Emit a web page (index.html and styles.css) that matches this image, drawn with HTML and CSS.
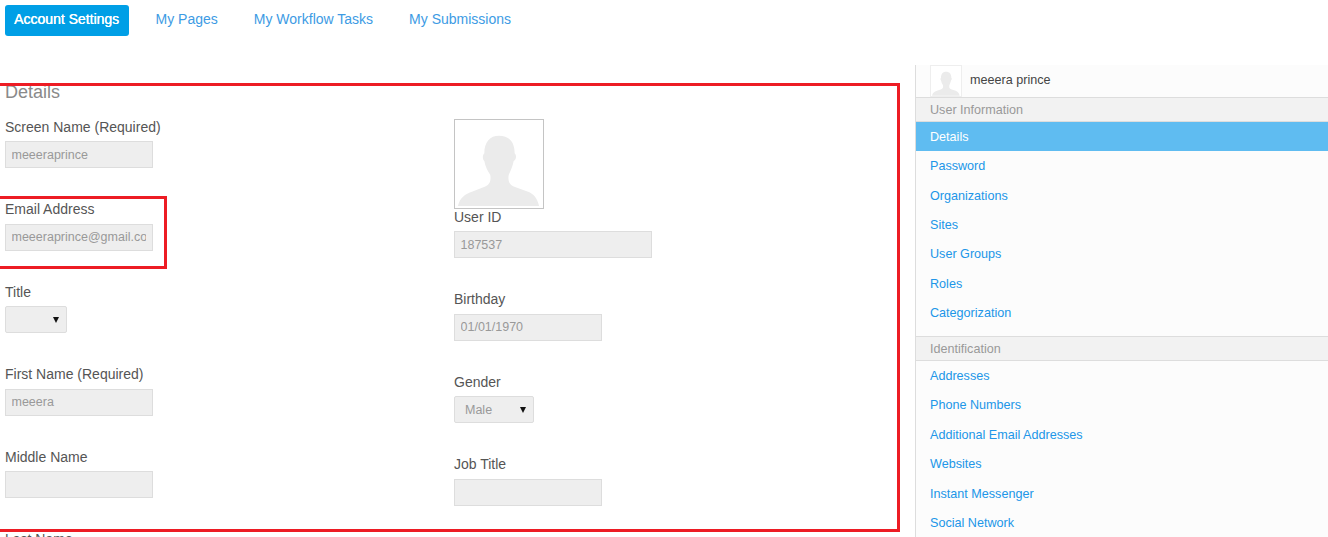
FILE: index.html
```html
<!DOCTYPE html>
<html lang="en">
<head>
<meta charset="utf-8">
<title>Account Settings</title>
<link rel="stylesheet" href="styles.css">
</head>
<body>
<svg class="defs" width="0" height="0" aria-hidden="true">
  <symbol id="silhouette" viewBox="0 0 90 90">
    <path d="M3 88C5 79 10 76 18 73L31 68C36 66 37 61 36 56C33 52 31 47 30 42C28 40 28 36 30 34C30 22 36 16 45 16C55 16 61 22 61 34C63 36 63 40 60 42C59 47 57 52 55 56C54 61 55 66 60 68L74 73C80 75 84 79 86 88Z"/>
  </symbol>
</svg>
<nav class="topnav">
  <a class="tab tab-active" href="#">Account Settings</a>
  <a class="tab" href="#">My Pages</a>
  <a class="tab" href="#">My Workflow Tasks</a>
  <a class="tab" href="#">My Submissions</a>
</nav>
<div class="layout">
  <main class="content">
    <h2 class="title">Details</h2>
    <div class="columns">
      <div class="col col-left">
        <div class="field"><label>Screen Name (Required)</label><input class="input" type="text" value="meeeraprince" disabled></div>
        <div class="field"><label>Email Address</label><input class="input" type="text" value="meeeraprince@gmail.com" disabled></div>
        <div class="field"><label>Title</label><div class="select-wrap select-title"><select class="select" disabled><option></option></select></div></div>
        <div class="field"><label>First Name (Required)</label><input class="input" type="text" value="meeera" disabled></div>
        <div class="field"><label>Middle Name</label><input class="input" type="text" disabled></div>
        <div class="field"><label>Last Name</label><input class="input" type="text" disabled></div>
      </div>
      <div class="col col-right">
        <div class="portrait"><svg class="sil" width="88" height="88"><use href="#silhouette"/></svg></div>
        <div class="field field-first"><label>User ID</label><input class="input input-wide" type="text" value="187537" disabled></div>
        <div class="field"><label>Birthday</label><input class="input" type="text" value="01/01/1970" disabled></div>
        <div class="field"><label>Gender</label><div class="select-wrap select-gender"><select class="select" disabled><option>Male</option></select></div></div>
        <div class="field"><label>Job Title</label><input class="input" type="text" disabled></div>
      </div>
    </div>
    <div class="mark mark-outer"></div>
    <div class="mark mark-inner"></div>
  </main>
  <aside class="sidebar">
    <div class="user">
      <div class="avatar"><svg class="sil" width="30" height="31"><use href="#silhouette"/></svg></div>
      <span class="user-name">meeera prince</span>
    </div>
    <div class="group-head">User Information</div>
    <ul class="menu menu-first">
      <li><a class="current" href="#">Details</a></li>
      <li><a href="#">Password</a></li>
      <li><a href="#">Organizations</a></li>
      <li><a href="#">Sites</a></li>
      <li><a href="#">User Groups</a></li>
      <li><a href="#">Roles</a></li>
      <li><a href="#">Categorization</a></li>
    </ul>
    <div class="group-head group-second">Identification</div>
    <ul class="menu">
      <li><a href="#">Addresses</a></li>
      <li><a href="#">Phone Numbers</a></li>
      <li><a href="#">Additional Email Addresses</a></li>
      <li><a href="#">Websites</a></li>
      <li><a href="#">Instant Messenger</a></li>
      <li><a href="#">Social Network</a></li>
    </ul>
  </aside>
</div>
</body>
</html>
```
FILE: styles.css
```css
* { box-sizing: border-box; }
html, body { margin: 0; height: 537px; overflow: hidden; background: #fff; }
body { font-family: "Liberation Sans", Arial, sans-serif; font-size: 14px; color: #555; }
.defs { position: absolute; }
a { text-decoration: none; color: #2a9be6; }

.topnav { display: flex; align-items: flex-start; gap: 16px; height: 65px; padding: 5px 0 0 5px; }
.tab { height: 31px; line-height: 28px; padding: 0 9px; margin-right: 2px; border-radius: 3px; font-size: 14px; color: #3d9be4; }
.tab-active { background: #009fe6; color: #fff; padding-right: 9.5px; text-shadow: 0.3px 0 0 #fff; }

.layout { display: flex; align-items: stretch; height: 472px; }
.content { position: relative; width: 915px; flex: none; padding: 0 0 0 5px; }
.title { margin: 16px 0 0; font-size: 18px; line-height: 22px; font-weight: 400; color: #8a8a8a; }

.columns { display: flex; margin-top: 13.9px; }
.col-left { width: 449px; flex: none; }
.col-right { flex: 1; padding-top: 2px; }

.field { height: 82.5px; }
.field label { display: block; height: 20px; line-height: 20px; margin-bottom: 4.2px; color: #555; }
.field-first { margin-top: -2px; }

.input { display: block; width: 148px; height: 27px; padding: 0 6px 0 5.5px; border: 1px solid #ddd; border-radius: 0; background: #eee; font: 12.5px/25px "Liberation Sans", Arial, sans-serif; color: #999; opacity: 1; -webkit-text-fill-color: #999; }
.input-wide { width: 198px; }

.select-wrap { position: relative; height: 27px; }
.select-title { width: 62px; }
.select-gender { width: 80px; }
.select-wrap::after { content: ""; position: absolute; right: 8px; top: 11px; border-style: solid; border-width: 6px 3.5px 0; border-color: #111 transparent transparent; }
.select { display: block; width: 100%; height: 27px; padding: 0 10px; border: 1px solid #ddd; border-radius: 2px; background: #eee; font: 12.5px "Liberation Sans", Arial, sans-serif; color: #999; opacity: 1; appearance: none; -webkit-appearance: none; }

.portrait { width: 90px; height: 90px; border: 1px solid #c4c4c4; background: #fff; }
.sil { display: block; fill: #ebebeb; }

.mark { position: absolute; border: 3px solid #ed1c24; pointer-events: none; }
.mark-outer { left: -3px; top: 18px; width: 903px; height: 449px; }
.mark-inner { left: -3px; top: 131px; width: 170px; height: 73px; }

.sidebar { flex: 1; min-width: 0; border-left: 1px solid #ddd; background: #fcfcfc; font-size: 12.6px; }
.user { display: flex; align-items: flex-start; height: 33px; padding-left: 14px; border-bottom: 1px solid #ddd; }
.avatar { width: 32px; height: 32px; border: 1px solid #eee; background: #fff; overflow: hidden; flex: none; }
.user-name { margin-left: 8px; line-height: 31px; color: #444; font-size: 12.6px; }
.group-head { height: 24px; line-height: 25px; padding-left: 14px; background: #f2f2f2; border-bottom: 1px solid #ddd; color: #999; font-size: 12.6px; }
.group-second { border-top: 1px solid #ddd; height: 25px; margin-top: 8px; line-height: 25px; }
.menu { list-style: none; margin: 0; padding: 0; }
.menu-first { height: 206px; }
.menu a { display: block; height: 29.4px; line-height: 30px; padding-left: 14px; color: #2196e8; }
.menu-first a { height: 29.35px; }
.menu a.current { background: #5fbcf1; color: #fff; }
```
